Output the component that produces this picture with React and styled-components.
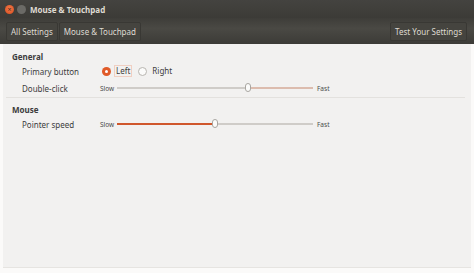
import React from 'react';
import styled, { createGlobalStyle } from 'styled-components';

const Global = createGlobalStyle`
  html, body { margin: 0; padding: 0; }
  body {
    width: 474px;
    height: 273px;
    overflow: hidden;
    background: #fbfaf9;
    font-family: "Noto Sans", "DejaVu Sans", sans-serif;
  }
`;

const Window = styled.div`
  display: flex;
  flex-direction: column;
  width: 474px;
  height: 268px;
`;

const TitleBar = styled.div`
  display: flex;
  align-items: center;
  height: 18px;
  padding-left: 5px;
  gap: 3px;
  background: linear-gradient(#444340, #3c3b37);
`;

const Dot = styled.span`
  width: 9px;
  height: 9px;
  border-radius: 50%;
  background: ${p => (p.$close ? 'radial-gradient(circle at 50% 40%, #f27a4a, #d94b1c)' : '#6b6a66')};
  display: flex;
  align-items: center;
  justify-content: center;
  color: #3a2a20;
  font-size: 7px;
  line-height: 1;
`;

const Title = styled.span`
  margin-left: 1px;
  color: #dfdbd2;
  font-size: 8px;
  font-weight: bold;
`;

const Toolbar = styled.div`
  display: flex;
  align-items: center;
  height: 26px;
  padding: 0 6px 0 6px;
  background: linear-gradient(#3e3d39, #4a4944 40%, #3c3b37);
`;

const ToolButton = styled.div`
  height: 17px;
  display: flex;
  align-items: center;
  padding: 0 4px;
  margin-right: 1px;
  border: 1px solid #393834;
  border-radius: 2px;
  background: #45443f;
  color: #dfdbd2;
  font-size: 8px;
`;

const Spacer = styled.div`
  flex: 1;
`;

const Content = styled.div`
  flex: 1;
  margin: 0 3px;
  background: #f2f1f0;
  border-bottom: 1px solid #e6e4e1;
  padding-top: 7px;
`;

const Section = styled.div`
  display: flex;
  flex-direction: column;
  gap: 1px;
  padding: 0 9px;
`;

const Heading = styled.div`
  font-size: 8px;
  font-weight: bold;
  color: #3c3c3c;
  height: 12px;
  line-height: 12px;
  margin-bottom: -1px;
`;

const Row = styled.div`
  display: grid;
  grid-template-columns: 80px 1fr;
  align-items: center;
  height: 16px;
  padding-left: 10px;
`;

const Label = styled.span`
  font-size: 8px;
  color: #3c3c3c;
`;

const Radios = styled.div`
  display: flex;
  align-items: center;
  gap: 6px;
`;

const RadioItem = styled.div`
  display: flex;
  align-items: center;
  gap: 3px;
`;

const RadioCircle = styled.span`
  box-sizing: border-box;
  width: 9px;
  height: 9px;
  border-radius: 50%;
  border: ${p => (p.$on ? 'none' : '1px solid #b8b5b0')};
  background: ${p => (p.$on ? '#e05a28' : '#fbfbfa')};
  display: flex;
  align-items: center;
  justify-content: center;
  &::after {
    content: '';
    display: ${p => (p.$on ? 'block' : 'none')};
    width: 3px;
    height: 3px;
    border-radius: 50%;
    background: #fff;
  }
`;

const RadioText = styled.span`
  font-size: 8px;
  color: #3c3c3c;
  padding: 0 1px;
  border: 1px solid ${p => (p.$focus ? '#f0cfc2' : 'transparent')};
  line-height: 10px;
`;

const SliderRow = styled.div`
  display: flex;
  align-items: center;
  gap: 2px;
  margin-left: -2px;
`;

const Tiny = styled.span`
  font-size: 6.5px;
  color: #4a4a4a;
  width: ${p => p.$w || 'auto'};
`;

const Track = styled.div`
  position: relative;
  width: 196px;
  height: 2px;
  background: #cfccc8;
  margin: 0 2px;
`;

const Fill = styled.div`
  height: 100%;
  background: ${p => p.$color};
  position: absolute;
  top: 0;
`;

const Thumb = styled.span`
  position: absolute;
  top: -4px;
  width: 6px;
  height: 9px;
  margin-left: -3px;
  box-sizing: border-box;
  border: 1px solid #a9a6a1;
  border-radius: 3px;
  background: #fbfbfa;
`;

const Divider = styled.div`
  height: 1px;
  background: #e3e1de;
  margin: 1px 6px 6px 3px;
`;

function Slider({ value, filled }) {
  const pct = value * 100;
  return (
    <SliderRow>
      <Tiny $w="13px">Slow</Tiny>
      <Track>
        {filled ? (
          <Fill $color="#d0572c" style={{ left: 0, width: pct + '%' }} />
        ) : (
          <Fill $color="#dcbcae" style={{ left: pct + '%', right: 0 }} />
        )}
        <Thumb style={{ left: pct + '%' }} />
      </Track>
      <Tiny>Fast</Tiny>
    </SliderRow>
  );
}

export default function App() {
  return (
    <>
      <Global />
      <Window>
        <TitleBar>
          <Dot $close>×</Dot>
          <Dot />
          <Title>Mouse &amp; Touchpad</Title>
        </TitleBar>
        <Toolbar>
          <ToolButton>All Settings</ToolButton>
          <ToolButton>Mouse &amp; Touchpad</ToolButton>
          <Spacer />
          <ToolButton>Test Your Settings</ToolButton>
        </Toolbar>
        <Content>
          <Section>
            <Heading>General</Heading>
            <Row>
              <Label>Primary button</Label>
              <Radios>
                <RadioItem>
                  <RadioCircle $on />
                  <RadioText $focus>Left</RadioText>
                </RadioItem>
                <RadioItem>
                  <RadioCircle />
                  <RadioText>Right</RadioText>
                </RadioItem>
              </Radios>
            </Row>
            <Row>
              <Label>Double-click</Label>
              <Slider value={0.67} />
            </Row>
          </Section>
          <Divider />
          <Section>
            <Heading>Mouse</Heading>
            <Row>
              <Label>Pointer speed</Label>
              <Slider value={0.5} filled />
            </Row>
          </Section>
        </Content>
      </Window>
    </>
  );
}
